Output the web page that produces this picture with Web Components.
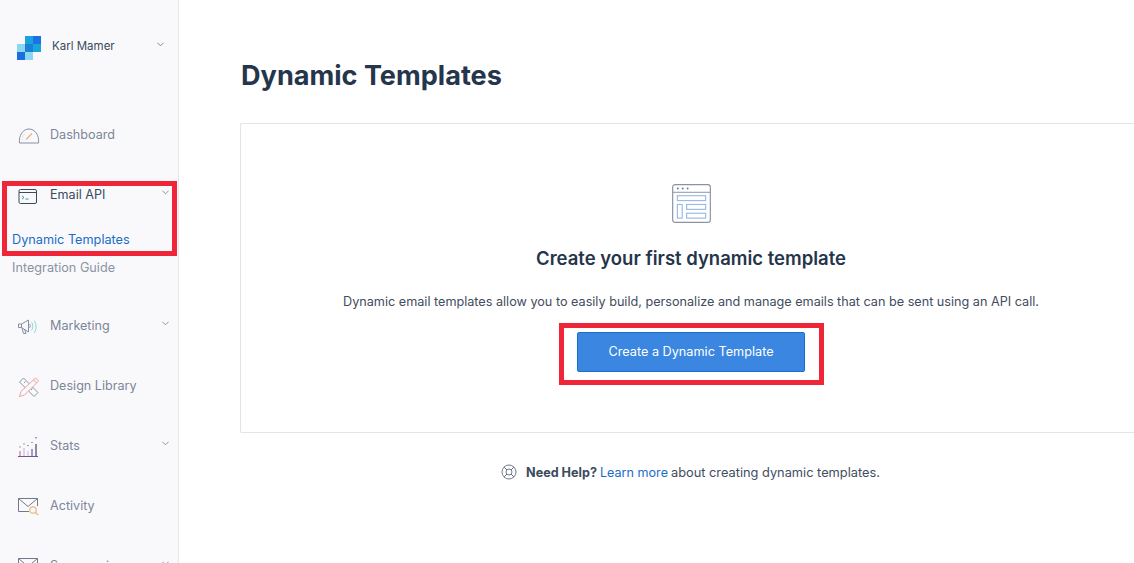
<!DOCTYPE html>
<html lang="en">
<head>
<meta charset="utf-8">
<title>Dynamic Templates</title>
<style>
  html, body { margin: 0; height: 100%; overflow: hidden; background: #fff; }
  body { font-family: Inter, "Liberation Sans", sans-serif; }
</style>
</head>
<body>
<app-shell>
  <side-bar slot="side">
    <user-menu name="Karl Mamer"></user-menu>
    <nav-item label="Dashboard" top="65">
      <svg slot="icon" width="22" height="16" viewBox="0 0 22 16" fill="none" stroke="#858fa3" stroke-width="1"><path d="M1.500 15C.5 7.500 5 1 11 1s10.500 6.500 9.500 14z"/><path d="M8 11.500l6-6" stroke="#eab08c" stroke-width="1.200"/><path d="M4 12.500c1-1 0-5 3-7" stroke="#e4e2ea"/></svg>
    </nav-item>
    <nav-item label="Email API" top="42" active chevron>
      <svg slot="icon" width="19" height="15" viewBox="0 0 19 15" fill="none" stroke="#3d4a5c" stroke-width="1"><rect x="1" y=".5" width="17.500" height="14" rx="1.500"/><path d="M1 3.500h17.500"/><path d="M4 6.800l2 1.700-2 1.700" stroke="#3f9a8c"/><path d="M7.500 10h3" stroke="#3f9a8c"/></svg>
    </nav-item>
    <sub-link current>Dynamic Templates</sub-link>
    <sub-link>Integration Guide</sub-link>
    <nav-item label="Marketing" top="39" chevron>
      <svg slot="icon" width="21" height="16" viewBox="0 0 21 16" fill="none" stroke="#858fa3" stroke-width="1"><path d="M.5 5v3.500h3l7 4.500V1l-7 4z"/><path d="M3.500 5v3.500M4 9l1.500 5.500h2.500L6.500 10"/><path d="M11.500 5c1 1 1 3 0 4" stroke="#8fa0b0"/><path d="M13.500 3c1.800 2.500 1.800 6 0 8.500M16 1.500c2.800 3.500 2.800 9 0 12.500" stroke="#8fd6cc"/></svg>
    </nav-item>
    <nav-item label="Design Library" top="42">
      <svg slot="icon" width="22" height="21" viewBox="0 0 22 21" fill="none" stroke="#8a93a6" stroke-width="1"><path d="M5.500 1L1.500 5 16 19.500l4-4z"/><path d="M6 6l1.500-1.500M9.500 9.500L11 8M13 13l1.500-1.500"/><path d="M17.500 1l3 3L6.500 18l-5 1.500L3 14.500z" stroke="#e8a4a4" fill="#f9f9fc"/><path d="M15.500 3l3 3" stroke="#e8a4a4"/></svg>
    </nav-item>
    <nav-item label="Stats" top="42" chevron>
      <svg slot="icon" width="20" height="20" viewBox="0 0 20 20" fill="none" stroke-width="1.500"><path d="M0 19.500h20" stroke="#6b5a8e" stroke-width="1"/><path d="M2 19v-5" stroke="#cf8fb4"/><path d="M6 19v-8" stroke="#dcc4dc"/><path d="M10 19v-5" stroke="#d9cfe6"/><path d="M14 19v-7" stroke="#8d74c0"/><path d="M18 19V7" stroke="#6b6480"/><path d="M2 9.500v1M6 6.500v1M10 8v1M14 5v1M18 0v1.500" stroke="#5f6a80" stroke-width="1.200"/></svg>
    </nav-item>
    <nav-item label="Activity" top="42">
      <svg slot="icon" width="21" height="18" viewBox="0 0 21 18" fill="none" stroke="#6f7a8c" stroke-width="1"><path d="M11 13.500H.5V.5h19V8"/><path d="M.5.5l9.500 8 9.500-8"/><circle cx="15" cy="12" r="3.200" stroke="#ecb77a" stroke-width="1.200"/><path d="M17.500 14.500l2.500 2.500" stroke="#ecb77a" stroke-width="1.200"/></svg>
    </nav-item>
    <nav-item label="Suppressions" top="42" chevron>
      <svg slot="icon" width="21" height="18" viewBox="0 0 21 18" fill="none" stroke="#6f7a8c" stroke-width="1"><path d="M.5.5h19v14H.5z"/><path d="M.5.5l9.500 8 9.500-8"/></svg>
    </nav-item>
  </side-bar>

  <page-title>Dynamic Templates</page-title>
  <empty-card
    heading="Create your first dynamic template"
    body="Dynamic email templates allow you to easily build, personalize and manage emails that can be sent using an API call."
    action="Create a Dynamic Template"></empty-card>
  <help-line></help-line>

  <red-box slot="over" style="left:2px;top:181px;width:175px;height:75px"></red-box>
  <red-box slot="over" style="left:559px;top:323px;width:265px;height:62px"></red-box>
</app-shell>

<script>
const chevron = `<svg width="7" height="5" viewBox="0 0 8 5" fill="none" stroke="currentColor" stroke-width="1"><path d="M.5.5L4 4 7.500.5"/></svg>`;

class AppShell extends HTMLElement {
  constructor() {
    super();
    this.attachShadow({ mode: 'open' }).innerHTML = `
      <style>
        :host { display: flex; width: 1134px; height: 563px; overflow: hidden; position: relative; color: #294661; }
        main { flex: 1; min-width: 0; padding: 0 0 0 61px; display: flex; flex-direction: column; }
      </style>
      <slot name="side"></slot>
      <main><slot></slot></main>
      <slot name="over"></slot>`;
  }
}

class SideBar extends HTMLElement {
  constructor() {
    super();
    this.attachShadow({ mode: 'open' }).innerHTML = `
      <style>
        :host { display: flex; flex-direction: column; flex: none; box-sizing: border-box; width: 179px; height: 563px; overflow: hidden;
                background: #f9f9fc; border-right: 1px solid #e6e7ea; padding-top: 36px; }
      </style>
      <slot></slot>`;
  }
}

class UserMenu extends HTMLElement {
  connectedCallback() {
    this.attachShadow({ mode: 'open' }).innerHTML = `
      <style>
        :host { display: flex; align-items: center; height: 24px; padding: 0 14px 0 17px; font-size: 11.500px; color: #3b4a5d; }
        svg.logo { flex: none; margin-right: 11px; }
        span { flex: 1; margin-top: -4px; }
        i { display: flex; color: #6f7a8c; margin-top: -7px; }
      </style>
      <svg class="logo" width="24" height="24" viewBox="0 0 24 24" shape-rendering="crispEdges">
        <rect x="8" y="0" width="8" height="8" fill="#1ba3e0"/><rect x="16" y="0" width="8" height="8" fill="#1a73e0"/>
        <rect x="0" y="8" width="8" height="8" fill="#8cd6f2"/><rect x="8" y="8" width="8" height="8" fill="#1a82d4"/><rect x="16" y="8" width="8" height="8" fill="#1ba3e0"/>
        <rect x="0" y="16" width="8" height="8" fill="#1a6ee0"/><rect x="8" y="16" width="8" height="8" fill="#8cd6f2"/>
      </svg>
      <span>${this.getAttribute('name')}</span><i>${chevron}</i>`;
  }
}

class NavItem extends HTMLElement {
  connectedCallback() {
    const active = this.hasAttribute('active');
    this.style.marginTop = (this.getAttribute('top') || 0) + 'px';
    this.attachShadow({ mode: 'open' }).innerHTML = `
      <style>
        :host { display: flex; align-items: center; height: 18px; padding: 0 9px 0 18px; font-size: 12.600px; color: ${active ? '#3b4a5d' : '#7c8698'}; }
        .ico { flex: none; width: 32px; height: 18px; display: flex; align-items: center; justify-content: flex-start; }
        ::slotted(svg) { margin-top: 4px; }
        span { flex: 1; white-space: nowrap; }
        i { display: flex; color: #7c8698; margin-top: -3px; }
      </style>
      <div class="ico"><slot name="icon"></slot></div>
      <span>${this.getAttribute('label')}</span>
      ${this.hasAttribute('chevron') ? `<i>${chevron}</i>` : ''}`;
  }
}

class SubLink extends HTMLElement {
  connectedCallback() {
    const current = this.hasAttribute('current');
    this.attachShadow({ mode: 'open' }).innerHTML = `
      <style>
        :host { display: block; height: 18px; line-height: 18px; padding-left: 12px; margin-top: ${current ? 28 : 10}px; font-size: 12.700px; color: ${current ? '#1a6dc9' : '#8a93a3'}; }
      </style><slot></slot>`;
  }
}

class PageTitle extends HTMLElement {
  constructor() {
    super();
    this.attachShadow({ mode: 'open' }).innerHTML = `
      <style>
        :host { display: block; margin: 58px 0 30px 1px; height: 35px; line-height: 35px; font-size: 27.100px; font-weight: 700; color: #25354b; white-space: nowrap; }
      </style><slot></slot>`;
  }
}

class EmptyCard extends HTMLElement {
  connectedCallback() {
    this.attachShadow({ mode: 'open' }).innerHTML = `
      <style>
        :host { display: flex; flex-direction: column; align-items: center; box-sizing: border-box; width: 901px; height: 310px; margin-right: -8px;
                border: 1px solid #e2e4e8; border-right: 0; padding-top: 60px; border-radius: 2px 0 0 2px; }
        svg { flex: none; }
        h2 { margin: 23px 0 0; font-size: 18.500px; line-height: 24px; font-weight: 600; color: #25354b; white-space: nowrap; }
        p { margin: 23px 0 0; font-size: 12.650px; line-height: 18px; color: #3f4d60; white-space: nowrap; }
        button { margin-top: 21px; width: 228px; height: 40px; border: 1px solid #1a6dc9; border-radius: 2px; background: #3b86e0; color: #fff; font: 400 12.700px Inter, "Liberation Sans", sans-serif; padding: 0 0 2px; }
      </style>
      <svg width="39" height="39" viewBox="0 0 40 40" fill="none">
        <rect x=".7" y=".7" width="38.600" height="38.600" rx="2.500" stroke="#8a93a3" stroke-width="1.200"/>
        <path d="M1 8.500h38" stroke="#8a93a3" stroke-width="1"/>
        <g fill="#6f7a8c"><circle cx="6" cy="4.700" r="1"/><circle cx="11" cy="4.700" r="1"/><circle cx="16" cy="4.700" r="1"/></g>
        <g stroke="#9bbbe4" stroke-width="1.200"><rect x="5.500" y="12" width="29" height="5"/><rect x="5.500" y="21" width="5" height="14"/><rect x="15" y="21" width="19.500" height="5"/><rect x="15" y="30" width="19.500" height="5"/></g>
      </svg>
      <h2>${this.getAttribute('heading')}</h2>
      <p>${this.getAttribute('body')}</p>
      <button type="button">${this.getAttribute('action')}</button>`;
  }
}

class HelpLine extends HTMLElement {
  constructor() {
    super();
    this.attachShadow({ mode: 'open' }).innerHTML = `
      <style>
        :host { display: flex; align-items: center; justify-content: center; margin-top: 30px; height: 18px; font-size: 12.600px; color: #3f4d60; white-space: nowrap; width: 901px; }
        svg { margin-right: 9px; flex: none; }
        b { font-weight: 700; color: #3b4a5d; margin-right: 3px; }
        a { color: #1a6dc9; text-decoration: none; margin-right: 3px; }
        span { font-size: 12.800px; }
      </style>
      <svg width="16" height="16" viewBox="0 0 16 16" fill="none" stroke="#6f7a8c" stroke-width="1"><circle cx="8" cy="8" r="7"/><circle cx="8" cy="8" r="3"/><path d="M3 3l3 3M13 3l-3 3M3 13l3-3M13 13l-3-3"/></svg>
      <b>Need Help?</b><a href="#">Learn more</a><span>about creating dynamic templates.</span>`;
  }
}

class RedBox extends HTMLElement {
  constructor() {
    super();
    this.attachShadow({ mode: 'open' }).innerHTML = `
      <style>
        :host { display: block; position: absolute; box-sizing: border-box; border: 5px solid #ef2638; pointer-events: none; }
      </style>`;
  }
}

customElements.define('app-shell', AppShell);
customElements.define('side-bar', SideBar);
customElements.define('user-menu', UserMenu);
customElements.define('nav-item', NavItem);
customElements.define('sub-link', SubLink);
customElements.define('page-title', PageTitle);
customElements.define('empty-card', EmptyCard);
customElements.define('help-line', HelpLine);
customElements.define('red-box', RedBox);
</script>
</body>
</html>
